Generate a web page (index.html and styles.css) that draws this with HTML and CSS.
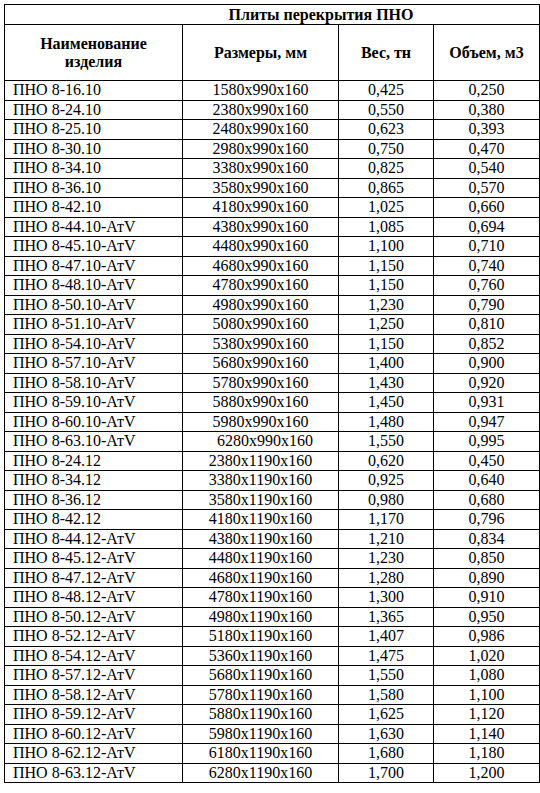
FILE: index.html
```
<!DOCTYPE html>
<html lang="ru">
<head>
<meta charset="utf-8">
<link rel="stylesheet" href="styles.css">
</head>
<body>
<table class="tbl">
<colgroup><col class="c1"><col class="c2"><col class="c3"><col class="c4"></colgroup>
<thead>
<tr class="title-row"><th colspan="4" class="title">Плиты перекрытия ПНО</th></tr>
<tr class="head-row"><th>Наименование<br>изделия</th><th>Размеры, мм</th><th>Вес, тн</th><th>Объем, м3</th></tr>
</thead>
<tbody>
<tr><td class="name">ПНО 8-16.10</td><td>1580x990x160</td><td>0,425</td><td>0,250</td></tr>
<tr><td class="name">ПНО 8-24.10</td><td>2380x990x160</td><td>0,550</td><td>0,380</td></tr>
<tr><td class="name">ПНО 8-25.10</td><td>2480x990x160</td><td>0,623</td><td>0,393</td></tr>
<tr><td class="name">ПНО 8-30.10</td><td>2980x990x160</td><td>0,750</td><td>0,470</td></tr>
<tr><td class="name">ПНО 8-34.10</td><td>3380x990x160</td><td>0,825</td><td>0,540</td></tr>
<tr><td class="name">ПНО 8-36.10</td><td>3580x990x160</td><td>0,865</td><td>0,570</td></tr>
<tr><td class="name">ПНО 8-42.10</td><td>4180x990x160</td><td>1,025</td><td>0,660</td></tr>
<tr><td class="name">ПНО 8-44.10-АтV</td><td>4380x990x160</td><td>1,085</td><td>0,694</td></tr>
<tr><td class="name">ПНО 8-45.10-АтV</td><td>4480x990x160</td><td>1,100</td><td>0,710</td></tr>
<tr><td class="name">ПНО 8-47.10-АтV</td><td>4680x990x160</td><td>1,150</td><td>0,740</td></tr>
<tr><td class="name">ПНО 8-48.10-АтV</td><td>4780x990x160</td><td>1,150</td><td>0,760</td></tr>
<tr><td class="name">ПНО 8-50.10-АтV</td><td>4980x990x160</td><td>1,230</td><td>0,790</td></tr>
<tr><td class="name">ПНО 8-51.10-АтV</td><td>5080x990x160</td><td>1,250</td><td>0,810</td></tr>
<tr><td class="name">ПНО 8-54.10-АтV</td><td>5380x990x160</td><td>1,150</td><td>0,852</td></tr>
<tr><td class="name">ПНО 8-57.10-АтV</td><td>5680x990x160</td><td>1,400</td><td>0,900</td></tr>
<tr><td class="name">ПНО 8-58.10-АтV</td><td>5780x990x160</td><td>1,430</td><td>0,920</td></tr>
<tr><td class="name">ПНО 8-59.10-АтV</td><td>5880x990x160</td><td>1,450</td><td>0,931</td></tr>
<tr><td class="name">ПНО 8-60.10-АтV</td><td>5980x990x160</td><td>1,480</td><td>0,947</td></tr>
<tr><td class="name">ПНО 8-63.10-АтV</td><td class="shift">6280x990x160</td><td>1,550</td><td>0,995</td></tr>
<tr><td class="name">ПНО 8-24.12</td><td>2380x1190x160</td><td>0,620</td><td>0,450</td></tr>
<tr><td class="name">ПНО 8-34.12</td><td>3380x1190x160</td><td>0,925</td><td>0,640</td></tr>
<tr><td class="name">ПНО 8-36.12</td><td>3580x1190x160</td><td>0,980</td><td>0,680</td></tr>
<tr><td class="name">ПНО 8-42.12</td><td>4180x1190x160</td><td>1,170</td><td>0,796</td></tr>
<tr><td class="name">ПНО 8-44.12-АтV</td><td>4380x1190x160</td><td>1,210</td><td>0,834</td></tr>
<tr><td class="name">ПНО 8-45.12-АтV</td><td>4480x1190x160</td><td>1,230</td><td>0,850</td></tr>
<tr><td class="name">ПНО 8-47.12-АтV</td><td>4680x1190x160</td><td>1,280</td><td>0,890</td></tr>
<tr><td class="name">ПНО 8-48.12-АтV</td><td>4780x1190x160</td><td>1,300</td><td>0,910</td></tr>
<tr><td class="name">ПНО 8-50.12-АтV</td><td>4980x1190x160</td><td>1,365</td><td>0,950</td></tr>
<tr><td class="name">ПНО 8-52.12-АтV</td><td>5180x1190x160</td><td>1,407</td><td>0,986</td></tr>
<tr><td class="name">ПНО 8-54.12-АтV</td><td>5360x1190x160</td><td>1,475</td><td>1,020</td></tr>
<tr><td class="name">ПНО 8-57.12-АтV</td><td>5680x1190x160</td><td>1,550</td><td>1,080</td></tr>
<tr><td class="name">ПНО 8-58.12-АтV</td><td>5780x1190x160</td><td>1,580</td><td>1,100</td></tr>
<tr><td class="name">ПНО 8-59.12-АтV</td><td>5880x1190x160</td><td>1,625</td><td>1,120</td></tr>
<tr><td class="name">ПНО 8-60.12-АтV</td><td>5980x1190x160</td><td>1,630</td><td>1,140</td></tr>
<tr><td class="name">ПНО 8-62.12-АтV</td><td>6180x1190x160</td><td>1,680</td><td>1,180</td></tr>
<tr><td class="name">ПНО 8-63.12-АтV</td><td>6280x1190x160</td><td>1,700</td><td>1,200</td></tr>
</tbody>
</table>
</body>
</html>
```
FILE: styles.css
```
html, body {
  margin: 0;
  padding: 0;
  background: #fff;
}
body {
  padding: 4px 0 0 4px;
  font-family: "Liberation Serif", "Times New Roman", serif;
  color: #000;
}
.tbl {
  border-collapse: collapse;
  table-layout: fixed;
  width: 535px;
  font-size: 16px;
}
.c1 { width: 178px; }
.c2 { width: 156px; }
.c3 { width: 95px; }
.c4 { width: 106px; }
.tbl th, .tbl td {
  border: 1px solid #000;
  padding: 0;
  text-align: center;
  vertical-align: middle;
  line-height: 18px;
  white-space: nowrap;
}
.title-row { height: 20px; }
.tbl th.title {
  font-size: 16px;
  font-weight: bold;
  padding-left: 98px;
}
.head-row { height: 56px; }
.tbl .head-row th {
  font-size: 16px;
  font-weight: bold;
  line-height: 18px;
}
tbody tr { height: 19.5px; }
.tbl td.name {
  text-align: left;
  padding-left: 8px;
}
.tbl td.shift { padding-left: 9px; }
```
